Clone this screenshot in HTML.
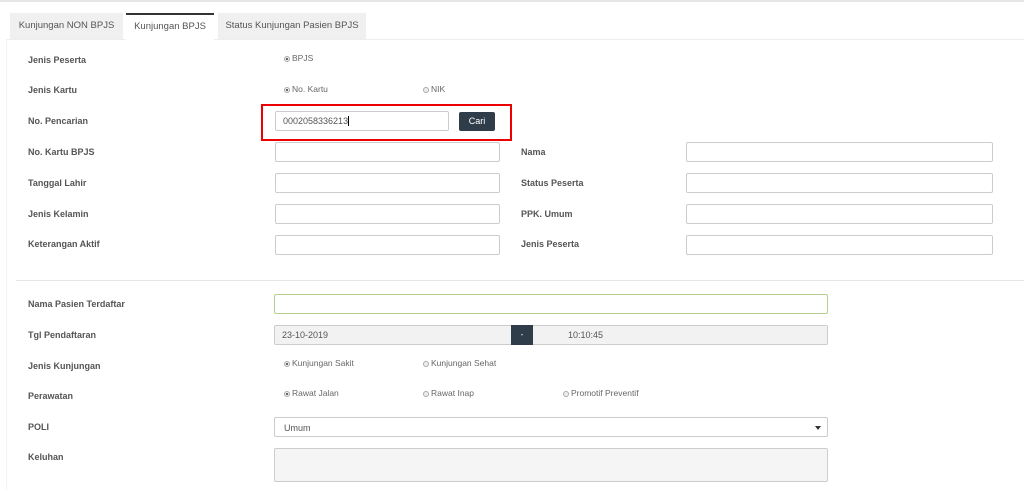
<!DOCTYPE html><html><head><style>
body{margin:0;width:1024px;height:490px;background:#fff;font-family:"Liberation Sans",sans-serif;position:relative;overflow:hidden;color:#333}
div,span{position:absolute;box-sizing:border-box}
.l{left:28px;font-size:9px;font-weight:bold;color:#555}
.r{font-size:9px;font-weight:bold;color:#555;left:521px}
.in{border:1px solid #ccc;border-radius:2px;height:20px;background:#fff}
.t{font-size:9.5px;color:#555;line-height:26px;text-align:center;top:13px;height:26px;white-space:nowrap}
.rd{font-size:8.5px;color:#666;white-space:nowrap}
.rd i{display:inline-block;width:6px;height:6px;border:1px solid #aaa;border-radius:50%;margin-right:2px;vertical-align:-1px;background:#eee;box-sizing:border-box}
.rd i.on{background:radial-gradient(#666 40%,#eee 45%)}
.v{font-size:9px;color:#555}
</style></head><body>
<div style="left:0;top:0;width:1024px;height:2px;background:#e5e5e5"></div>
<div style="left:6px;top:39px;width:1018px;height:1px;background:#eee"></div>
<div style="left:6px;top:39px;width:1px;height:451px;background:#f3f3f3"></div>
<div class="t" style="left:10px;width:113px;background:#f0f0f0">Kunjungan NON BPJS</div>
<div class="t" style="left:126px;width:88px;background:#fff;border-top:2px solid #333;line-height:24px;height:27px">Kunjungan BPJS</div>
<div class="t" style="left:218px;width:148px;background:#f0f0f0">Status Kunjungan Pasien BPJS</div>

<div class="l" style="top:55px">Jenis Peserta</div>
<div class="rd" style="left:284px;top:53px"><i class="on"></i>BPJS</div>
<div class="l" style="top:85px">Jenis Kartu</div>
<div class="rd" style="left:284px;top:84px"><i class="on"></i>No. Kartu</div>
<div class="rd" style="left:423px;top:84px"><i></i>NIK</div>
<div class="l" style="top:116px">No. Pencarian</div>
<div style="left:261px;top:104px;width:251px;height:37px;border:2px solid #e00"></div>
<div class="in" style="left:275px;top:111px;width:174px"><span class="v" style="left:7px;top:4px">000205833621<span style="position:static;border-right:1px solid #000">3</span></span></div>
<div style="left:459px;top:112px;width:36px;height:19px;background:#2f3d4a;border-radius:2px;color:#fff;font-size:9px;text-align:center;line-height:19px">Cari</div>

<div class="l" style="top:147px">No. Kartu BPJS</div>
<div class="l" style="top:178px">Tanggal Lahir</div>
<div class="l" style="top:209px">Jenis Kelamin</div>
<div class="l" style="top:239px">Keterangan Aktif</div>
<div class="in" style="left:275px;top:142px;width:225px"></div>
<div class="in" style="left:275px;top:173px;width:225px"></div>
<div class="in" style="left:275px;top:204px;width:225px"></div>
<div class="in" style="left:275px;top:235px;width:225px"></div>
<div class="r" style="top:147px">Nama</div>
<div class="r" style="top:178px">Status Peserta</div>
<div class="r" style="top:209px">PPK. Umum</div>
<div class="r" style="top:239px">Jenis Peserta</div>
<div class="in" style="left:686px;top:142px;width:307px"></div>
<div class="in" style="left:686px;top:173px;width:307px"></div>
<div class="in" style="left:686px;top:204px;width:307px"></div>
<div class="in" style="left:686px;top:235px;width:307px"></div>

<div style="left:16px;top:280px;width:1008px;height:1px;background:#e5e5e5"></div>

<div class="l" style="top:299px">Nama Pasien Terdaftar</div>
<div class="in" style="left:274px;top:294px;width:554px;border-color:#b5cf8c"></div>
<div class="l" style="top:330px">Tgl Pendaftaran</div>
<div class="in" style="left:274px;top:325px;width:554px;background:#f2f2f2"><span class="v" style="left:7px;top:4px">23-10-2019</span><span class="v" style="left:293px;top:4px">10:10:45</span></div>
<div style="left:511px;top:325px;width:22px;height:20px;background:#2f3d4a;color:#fff;font-size:8px;text-align:center;line-height:20px">-</div>
<div class="l" style="top:361px">Jenis Kunjungan</div>
<div class="rd" style="left:284px;top:358px"><i class="on"></i>Kunjungan Sakit</div>
<div class="rd" style="left:423px;top:358px"><i></i>Kunjungan Sehat</div>
<div class="l" style="top:391px">Perawatan</div>
<div class="rd" style="left:284px;top:388px"><i class="on"></i>Rawat Jalan</div>
<div class="rd" style="left:423px;top:388px"><i></i>Rawat Inap</div>
<div class="rd" style="left:563px;top:388px"><i></i>Promotif Preventif</div>
<div class="l" style="top:422px">POLI</div>
<div class="in" style="left:274px;top:417px;width:554px"><span class="v" style="left:9px;top:5px">Umum</span><span style="right:6px;top:8px;border:3px solid transparent;border-top:4px solid #333"></span></div>
<div class="l" style="top:452px">Keluhan</div>
<div class="in" style="left:274px;top:448px;width:554px;height:34px;background:#f5f5f5"></div>
</body></html>
